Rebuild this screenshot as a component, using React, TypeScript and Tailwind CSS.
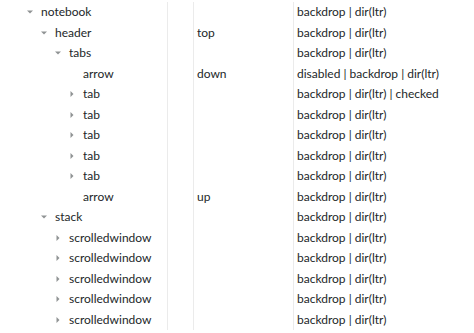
import React from "react";

type Row = { name: string; depth: number; exp: "open" | "closed" | "none"; val: string; cls: string };

const B = "backdrop | dir(ltr)";
const rows: Row[] = [
  { name: "notebook", depth: 0, exp: "open", val: "", cls: B },
  { name: "header", depth: 1, exp: "open", val: "top", cls: B },
  { name: "tabs", depth: 2, exp: "open", val: "", cls: B },
  { name: "arrow", depth: 3, exp: "none", val: "down", cls: "disabled | backdrop | dir(ltr)" },
  { name: "tab", depth: 3, exp: "closed", val: "", cls: "backdrop | dir(ltr) | checked" },
  { name: "tab", depth: 3, exp: "closed", val: "", cls: B },
  { name: "tab", depth: 3, exp: "closed", val: "", cls: B },
  { name: "tab", depth: 3, exp: "closed", val: "", cls: B },
  { name: "tab", depth: 3, exp: "closed", val: "", cls: B },
  { name: "arrow", depth: 3, exp: "none", val: "up", cls: B },
  { name: "stack", depth: 1, exp: "open", val: "", cls: B },
  { name: "scrolledwindow", depth: 2, exp: "closed", val: "", cls: B },
  { name: "scrolledwindow", depth: 2, exp: "closed", val: "", cls: B },
  { name: "scrolledwindow", depth: 2, exp: "closed", val: "", cls: B },
  { name: "scrolledwindow", depth: 2, exp: "closed", val: "", cls: B },
  { name: "scrolledwindow", depth: 2, exp: "closed", val: "", cls: B },
];

const indent = ["pl-[24px]", "pl-[38px]", "pl-[52px]", "pl-[66px]"];

function Expander({ exp }: { exp: Row["exp"] }) {
  return (
    <span className="w-[12px] h-full flex items-center justify-center shrink-0">
      {exp === "open" && (
        <svg width="6" height="4" viewBox="0 0 6 4">
          <path d="M0 0.5 L6 0.5 L3 3.5 Z" fill="#909394" />
        </svg>
      )}
      {exp === "closed" && (
        <svg width="4" height="6" viewBox="0 0 4 6">
          <path d="M0.5 0 L3.5 3 L0.5 6 Z" fill="#909394" />
        </svg>
      )}
    </span>
  );
}

export default function App() {
  return (
    <div
      className="w-[474px] h-[333px] overflow-hidden bg-white text-[#232729] text-[12px] flex flex-col pt-[2px]"
      style={{ fontFamily: "Lato, 'Noto Sans', sans-serif" }}
    >
      {rows.map((r, i) => (
        <div key={i} className="flex h-[20.5px] shrink-0 items-stretch">
          <div className={`w-[167px] flex items-center shrink-0 ${indent[r.depth]}`}>
            <Expander exp={r.exp} />
            <span className="ml-[5px] whitespace-nowrap">{r.name}</span>
          </div>
          <div className="w-[26px] border-l border-[#ebebeb] shrink-0" />
          <div className="w-[100px] border-l border-[#ebebeb] shrink-0 flex items-center pl-[3px]">
            {r.val}
          </div>
          <div className="flex-1 border-l border-[#ebebeb] flex items-center pl-[3px] whitespace-nowrap">
            {r.cls}
          </div>
        </div>
      ))}
    </div>
  );
}
